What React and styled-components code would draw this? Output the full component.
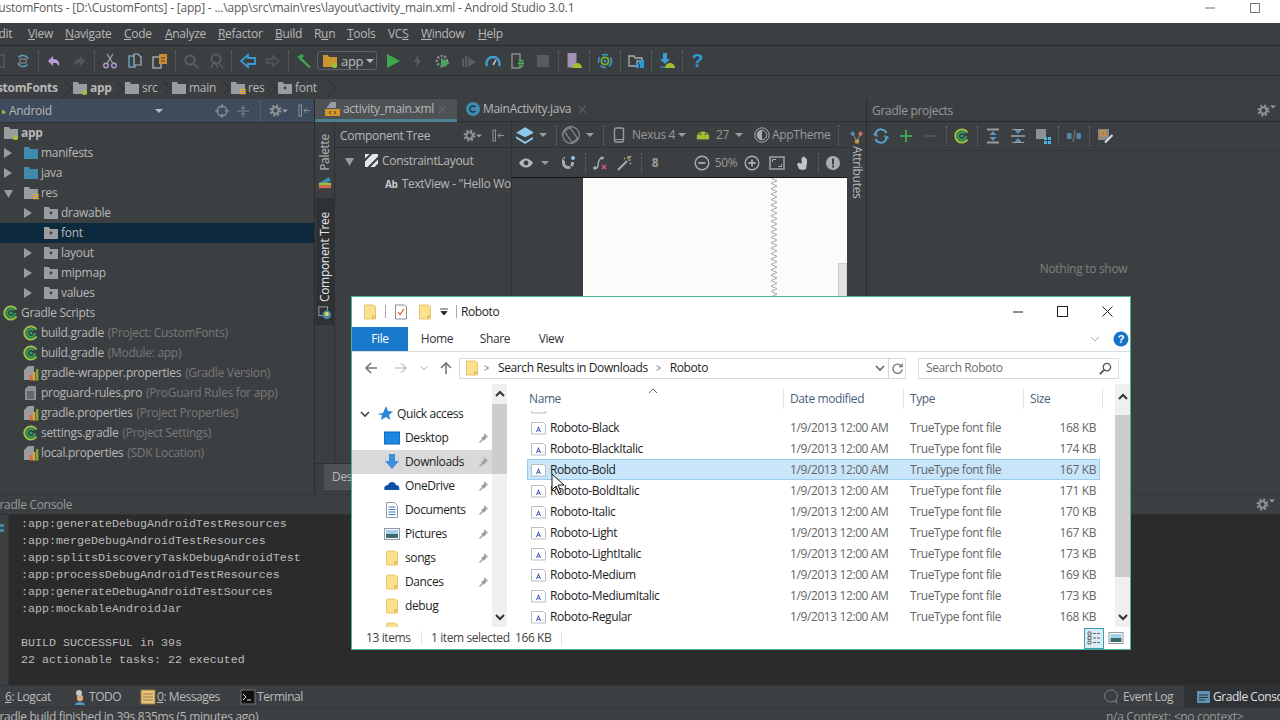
import React from 'react';
import styled, { createGlobalStyle } from 'styled-components';

const Global = createGlobalStyle`
  html, body { margin: 0; padding: 0; background: #2b2b2b; }
  * { box-sizing: border-box; }
`;

const UI = '"Open Sans", "Noto Sans", sans-serif';

const Screen = styled.div`
  position: relative; width: 1280px; height: 720px; overflow: hidden;
  display: flex; flex-direction: column; background: #3c3f41;
  font: 12px/16px ${UI}; letter-spacing: -0.3px; color: #b8b8b8;
`;
const TitleBar = styled.div`
  height: 23px; flex: none; background: #fff; color: #5a5a5a; display: flex; align-items: flex-start;
  padding-right: 3px; white-space: nowrap; letter-spacing: -0.2px;
`;
const TitleText = styled.span` margin-left: -9px; flex: 1; `;
const WinCtl = styled.div` width: 45px; height: 16px; display: flex; align-items: center; justify-content: center; flex: none; `;
const Menu = styled.div`
  height: 23px; flex: none; display: flex; align-items: center; padding-bottom: 1px;
  border-bottom: 1px solid #2b2b2b; white-space: nowrap;
`;
const MenuItem = styled.span`
  width: ${p => p.$w}px; flex: none; margin-left: ${p => p.$ml || 0}px;
  u { text-decoration-thickness: 1px; text-underline-offset: 1px; }
`;
const Toolbar = styled.div`
  height: 30px; flex: none; display: flex; align-items: center; margin-left: -15px;
  border-bottom: 1px solid #2f3132;
`;
const ToolBtn = styled.div`
  width: ${p => p.$w || 25}px; height: 22px; flex: none; display: flex; align-items: center; justify-content: center;
  margin-left: ${p => p.$ml || 0}px;
`;
const Sep = styled.div`
  width: ${p => p.$w || 6}px; height: 20px; flex: none;
  &::after { content: ''; display: block; margin: 0 auto; width: 0; height: 100%; border-left: 1px dotted #6a6d6f; }
`;
const Combo = styled.div`
  width: 60px; height: 19px; margin: 0 3px 0 1px; flex: none; display: flex; align-items: center; gap: 3px; padding: 0 3px 0 4px;
  border: 1px solid #5e6163; border-radius: 3px; font-size: 13px; color: #bbb;
`;
const Help = styled.span` font: bold 19px/22px "Liberation Sans", sans-serif; color: #2e9bd6; `;
const Crumbs = styled.div`
  height: 23px; flex: none; display: flex; align-items: center; white-space: nowrap; margin-left: -18px;
`;
const Crumb = styled.div`
  display: flex; align-items: center; gap: 2px; width: ${p => p.$w}px; flex: none; font-weight: ${p => p.$b ? 700 : 400};
  position: relative;
  &::after {
    content: ''; position: absolute; right: 2px; top: 3px; width: 13px; height: 13px;
    border-top: 1px solid #2f3132; border-right: 1px solid #2f3132; transform: rotate(45deg) scale(.75, 1.1);
  }
`;
const Body = styled.div` height: 395px; flex: none; display: flex; `;
const Left = styled.div`
  width: 315px; flex: none; border-right: 1px solid #2b2b2b; display: flex; flex-direction: column;
`;
const PanelHead = styled.div`
  height: 24px; flex: none; background: #3d4b5c; display: flex; align-items: center; border-bottom: 1px solid #2f3132;
`;
const HeadLabel = styled.span` margin-left: 1px; width: 146px; flex: none; `;
const Tree = styled.div` display: flex; flex-direction: column; `;
const Row = styled.div`
  height: 20px; display: flex; align-items: center; white-space: nowrap; flex: none;
  padding-left: ${p => p.$lvl ? 3 + (p.$lvl - 1) * 20 : 3}px;
  background: ${p => p.$sel ? '#0d293e' : 'transparent'};
  font-weight: ${p => p.$b ? 700 : 400};
`;
const Arrow = styled.span` width: 20px; flex: none; display: flex; `;
const RowIcon = styled.span` width: 18px; height: 16px; flex: none; display: flex; align-items: center; `;
const Dim = styled.span` color: #787878; margin-left: 4px; `;
const Center = styled.div`
  width: 552px; flex: none; border-right: 1px solid #2b2b2b; display: flex; flex-direction: column;
`;
const Tabs = styled.div` height: 23px; flex: none; display: flex; border-bottom: 1px solid #2f3132; `;
const Tab = styled.div`
  width: 142px; flex: none; display: flex; align-items: center; gap: 3px; padding: 0 0 ${p => p.$sel ? 0 : 3}px 9px; height: 23px;
  background: ${p => p.$sel ? '#4e5254' : 'transparent'};
  border-bottom: ${p => p.$sel ? '3px solid #4a808f' : 'none'};
`;
const TabName = styled.span` width: 92px; flex: none; white-space: nowrap; `;
const Main = styled.div` flex: 1; display: flex; min-height: 0; `;
const Strip = styled.div`
  width: 20px; flex: none; display: flex; flex-direction: column; border-right: 1px solid #2f3132; padding-left: 1px;
`;
const VTab = styled.div`
  display: flex; flex-direction: column; align-items: center; flex: none; height: ${p => p.$h}px;
  background: ${p => p.$sel ? '#2f3234' : 'transparent'}; color: ${p => p.$sel ? '#e6e6e6' : '#bbb'};
  padding-top: ${p => p.$pt}px; gap: 4px;
`;
const VText = styled.span`
  writing-mode: vertical-rl; transform: rotate(${p => p.$cw ? 0 : 180}deg); white-space: nowrap; line-height: 18px;
`;
const CompTree = styled.div` width: 177px; flex: none; border-right: 1px solid #2f3132; display: flex; flex-direction: column; overflow: hidden; `;
const CTHead = styled.div`
  height: 26px; flex: none; display: flex; align-items: center; padding: 2px 0 0 5px; white-space: nowrap; border-bottom: 1px solid #2f3132;
  margin-bottom: 1px;
`;
const CTTitle = styled.span` width: 123px; flex: none; `;
const CTRow = styled.div`
  height: 23px; flex: none; display: flex; align-items: center; padding-left: ${p => p.$pl}px; gap: ${p => p.$gap}px; white-space: nowrap;
`;
const Ab = styled.b` font: bold 10px "Open Sans", sans-serif; color: #c8c8c8; `;
const Constraint = styled.span` margin-left: -7px; `;
const Design = styled.div` width: 335px; flex: none; display: flex; flex-direction: column; `;
const DBar = styled.div`
  height: ${p => p.$h}px; flex: none; display: flex; align-items: center; border-bottom: 1px solid ${p => p.$dark ? '#141414' : '#2f3132'}; white-space: nowrap;
  color: #9a9a9a;
`;
const DLabel = styled.span` width: ${p => p.$w}px; flex: none; text-align: ${p => p.$c ? 'center' : 'left'}; font-weight: ${p => p.$b ? 700 : 400}; `;
const Canvas = styled.div` flex: 1; padding-left: 71px; display: flex; `;
const Page = styled.div` flex: 1; background: #fbfcfa; position: relative; overflow: hidden; `;
const Zig = styled.svg` position: absolute; left: 187px; top: 0; `;
const PageScroll = styled.div` position: absolute; right: 0; top: 85px; bottom: 0; width: 9px; background: #e2e3e2; border: 1px solid #cfcfcf; `;
const AttrStrip = styled.div` flex: 1; display: flex; flex-direction: column; align-items: center; padding-top: 9px; gap: 1px; `;
const DesignBar = styled.div` height: 31px; flex: none; display: flex; border-top: 1px solid #2f3132; padding-left: 9px; `;
const DesignTab = styled.div` width: 90px; height: 26px; background: #4e5254; padding: 5px 0 0 8px; `;
const Right = styled.div` width: 433px; flex: none; display: flex; flex-direction: column; `;
const RightHead = styled.div`
  height: 23px; flex: none; display: flex; align-items: center; padding: 1px 0 0 5px; color: #999; border-bottom: 1px solid #2b2b2b;
`;
const Grow = styled.span` flex: 1; `;
const RightBar = styled.div` height: 29px; flex: none; display: flex; align-items: center; border-bottom: 1px solid #333536; `;
const Nothing = styled.div` padding: 110px 0 0 0; text-align: center; color: #7f7f7f; font-size: 12px; `;
const ConHead = styled.div`
  height: 20px; flex: none; display: flex; align-items: center; color: #999; white-space: nowrap; border-top: 1px solid #35383a;
`;
const ConTitle = styled.span` margin-left: -9px; flex: 1; `;
const GearSlot = styled.span` width: ${p => p.$w}px; flex: none; padding-left: 16px; display: flex; `;
const Console = styled.div` height: 171px; flex: none; display: flex; background: #2b2b2b; border-top: 1px solid #2f3132; `;
const Gutter = styled.div` width: 9px; flex: none; background: #3c3f41; border-right: 1px solid #333; padding-top: 9px; overflow: hidden; `;
const Log = styled.pre`
  margin: 0; padding: 1px 0 0 12px; font: 11.67px/17px "Liberation Mono", monospace; letter-spacing: 0; color: #bbbbbb;
`;
const Tools = styled.div`
  height: 22px; flex: none; display: flex; align-items: center; padding-left: 5px; border-top: 1px solid #323436; white-space: nowrap;
  letter-spacing: -0.45px;
`;
const ToolItem = styled.div`
  display: flex; align-items: center; gap: ${p => p.$gap || 1}px; height: 100%; flex: none; width: ${p => p.$w}px;
  background: ${p => p.$sel ? '#2f3234' : 'transparent'}; padding-left: ${p => p.$pl || 0}px;
  color: ${p => p.$sel ? '#e0e0e0' : '#bbb'};
  u { text-underline-offset: 1px; }
`;
const Status = styled.div`
  height: 13px; flex: none; display: flex; padding-top: 1px; border-top: 1px solid #323436; white-space: nowrap; overflow: hidden;
`;
const StatusL = styled.span` margin-left: -9px; flex: 1; `;
const StatusR = styled.span` width: 174px; flex: none; color: #999; `;

/* explorer */
const Win = styled.div`
  position: absolute; left: 351px; top: 296px; width: 780px; height: 354px; background: #fff; border: 1px solid #46b598;
  color: #1e1e1e; display: flex; flex-direction: column; letter-spacing: -0.4px;
`;
const WTitle = styled.div` height: 28px; flex: none; display: flex; align-items: center; padding: 1px 0 0 10px; `;
const QSep = styled.span` width: 1px; height: 13px; background: #aaa; flex: none; margin: 0 ${p => p.$m || 11}px; `;
const QGap = styled.span` width: ${p => p.$w}px; flex: none; `;
const WName = styled.span` flex: 1; margin-left: -4px; `;
const WBtn = styled.span` width: 45px; display: flex; justify-content: center; flex: none; `;
const Ribbon = styled.div` height: 27px; flex: none; display: flex; align-items: flex-start; padding-top: 2px; border-bottom: 1px solid #dadbdc; `;
const FileTab = styled.div` width: 56px; height: 24px; background: #1979ca; color: #fff; display: flex; align-items: center; justify-content: center; flex: none; `;
const RTab = styled.div` width: ${p => p.$w}px; height: 24px; display: flex; align-items: center; justify-content: center; flex: none; color: #333; `;
const RRight = styled.div` margin-left: auto; height: 24px; display: flex; align-items: center; gap: 13px; padding-right: 1px; `;
const Addr = styled.div` height: 32px; flex: none; display: flex; align-items: center; `;
const NavBtn = styled.span` width: ${p => p.$w}px; flex: none; display: flex; justify-content: center; `;
const AddrBox = styled.div`
  width: 447px; height: 21px; border: 1px solid #d9d9d9; display: flex; align-items: center; padding-left: 4px; flex: none; margin-left: 3px;
`;
const AddrText = styled.span` flex: 1; display: flex; align-items: center; gap: 7px; margin-left: 3px; color: #1e1e1e; `;
const AddrEnd = styled.span` width: 17px; height: 100%; flex: none; display: flex; align-items: center; justify-content: center; border-left: 1px solid #d9d9d9; margin-left: 3px; `;
const SearchBox = styled.div`
  width: 201px; height: 21px; margin-left: 12px; border: 1px solid #d9d9d9; display: flex; align-items: center; padding: 0 6px 0 7px; color: #6d6d6d; flex: none; justify-content: space-between;
`;
const WBody = styled.div` flex: 1; display: flex; min-height: 0; `;
const Nav = styled.div` width: 140px; flex: none; display: flex; flex-direction: column; overflow: hidden; padding-top: 18px; `;
const NavRow = styled.div`
  height: 24px; flex: none; display: flex; align-items: center; background: ${p => p.$sel ? '#d9d9d9' : 'transparent'};
  padding-left: ${p => p.$pl || 32}px; gap: ${p => p.$gap || 5}px; color: #1e1e1e;
`;
const NavName = styled.span` width: 67px; flex: none; white-space: nowrap; `;
const QuickName = styled.span` margin-left: -3px; white-space: nowrap; `;
const Scroll = styled.div` width: 15px; flex: none; background: #f0f0f0; display: flex; flex-direction: column; `;
const ScrollCap = styled.div`
  height: ${p => p.$h || 20}px; flex: none; display: flex; justify-content: center; align-items: ${p => p.$top ? 'flex-start' : 'center'};
  padding-top: ${p => p.$top ? 8 : 0}px;
`;
const ScrollTop = styled.div` height: ${p => p.$h}px; flex: none; `;
const Thumb = styled.div` height: ${p => p.$h}px; flex: none; background: #cdcdcd; `;
const List = styled.div` width: 605px; margin-left: 3px; flex: none; display: flex; flex-direction: column; min-height: 0; `;
const ListHead = styled.div` height: 27px; flex: none; display: flex; position: relative; color: #4c607a; `;
const Col = styled.div`
  width: ${p => p.$w}px; flex: none; padding: 7px 0 0 ${p => p.$pl || 6}px; position: relative;
  &::after { content: ''; position: absolute; right: 0; top: 4px; bottom: 2px; width: 1px; background: #e5e5e5; }
`;
const SortMark = styled.svg` position: absolute; left: 138px; top: 4px; `;
const Rows = styled.div` flex: 1; overflow: hidden; min-height: 0; `;
const FileRow = styled.div`
  height: 21px; margin: ${p => p.$first ? '-15px' : 0} 0 0 17px; width: 573px; padding-left: 4px; display: grid; align-items: center; white-space: nowrap;
  grid-template-columns: 19px 240px 120px 120px 66px;
  background: ${p => p.$sel ? '#c9e5fa' : 'transparent'};
  box-shadow: ${p => p.$sel ? 'inset 0 0 0 1px #9acdf0' : 'none'};
`;
const Cell = styled.span` color: #666; text-align: ${p => p.$r ? 'right' : 'left'}; `;
const WStatus = styled.div` height: 22px; flex: none; display: flex; align-items: center; padding-left: 14px; color: #444; white-space: nowrap; `;
const StatSep = styled.span` width: 1px; height: 14px; background: #e2e2e2; flex: none; `;
const Items = styled.span` width: 55px; flex: none; `;
const Sel = styled.span` width: 130px; flex: none; margin-left: 9px; `;
const ViewBtns = styled.div` margin-left: auto; display: flex; gap: 2px; padding-right: 4px; `;
const ViewBtn = styled.span`
  width: 20px; height: 21px; display: flex; align-items: center; justify-content: center;
  background: ${p => p.$sel ? '#d8ecf5' : 'transparent'}; border: 1px solid ${p => p.$sel ? '#3f9eb5' : 'transparent'};
`;
const Cursor = styled.svg` position: absolute; left: 551px; top: 473px; `;

const Svg = styled.svg` display: block; flex: none; `;
const Ic = ({ s = 16, vb = '0 0 16 16', children }) => (
  <Svg width={s} height={s} viewBox={vb}>{children}</Svg>
);

/* IDE icons */
const Folder = ({ c = '#9a9d9f', dot, lines, green }) => (
  <Ic>
    <path d="M1 2h5l1 2h8v10H1z" fill={c} />
    {dot && <circle cx="8" cy="8" r="1.4" fill="#3c3f41" />}
    {lines && <g fill="#e0a83c"><rect x="10" y="9" width="6" height="1.2" /><rect x="10" y="11" width="6" height="1.2" /><rect x="10" y="13" width="6" height="1.2" /></g>}
    {green && <circle cx="12.5" cy="12.5" r="2.6" fill="#97c13a" />}
  </Ic>
);
const Caret = ({ open, c = '#9a9d9f' }) => (
  <Ic s={10} vb="0 0 10 10">
    {open ? <path d="M1 2h9l-4.5 8z" fill={c} /> : <path d="M1 0l8 5-8 5z" fill={c} />}
  </Ic>
);
const Drop = ({ c = '#9a9d9f', s = 8 }) => <Ic s={s} vb="0 0 8 8"><path d="M0 2h8L4 6z" fill={c} /></Ic>;
const Gear = ({ c = '#8f9294', s = 13 }) => (
  <Ic s={s} vb="0 0 14 14">
    <circle cx="7" cy="7" r="5.2" fill="none" stroke={c} strokeWidth="2.6" strokeDasharray="2.1 2" />
    <circle cx="7" cy="7" r="3.4" fill="none" stroke={c} strokeWidth="2.2" />
  </Ic>
);
const GearDrop = () => <><Gear /><Drop s={6} /></>;
const HideIcon = () => (
  <Ic s={13} vb="0 0 13 13">
    <rect x="1" y="1" width="2.5" height="11" fill="none" stroke="#8f9294" />
    <path d="M12 6.5H6M8.5 4L6 6.5 8.5 9" fill="none" stroke="#8f9294" />
  </Ic>
);
const GradleIc = ({ s = 16 }) => (
  <Ic s={s}>
    <path d="M13.5 11.5A6.6 6.6 0 1 1 13.5 4.5" fill="none" stroke="#9bc346" strokeWidth="2" />
    <path d="M12 8a4 4 0 1 1-1-2.7" fill="none" stroke="#2f9e5b" strokeWidth="2" />
    <circle cx="8" cy="8" r="1.6" fill="#2f9e5b" />
  </Ic>
);
const PropIc = () => (
  <Ic>
    <path d="M1 5l4-4h6v14H1z" fill="#9a9d9f" />
    <rect x="7" y="10" width="2.4" height="5.6" fill="#e0662a" />
    <rect x="10" y="7" width="2.4" height="8.6" fill="#e0a03c" />
    <rect x="13" y="4" width="2.4" height="11.6" fill="#7fae2e" />
  </Ic>
);
const TextFileIc = () => (
  <Ic>
    <path d="M2 4l3-3h8v14H2z" fill="#8e9193" />
    <path d="M4 7h7M4 9h7M4 11h7M4 13h7" stroke="#3c3f41" />
  </Ic>
);
const XmlIc = () => (
  <Ic>
    <path d="M3 6l4-5h5v6H3z" fill="#9a9d9f" />
    <rect x="1" y="8" width="15" height="7" fill="#d9952c" />
    <path d="M7 10l-2 1.5L7 13M10 10l2 1.5L10 13" stroke="#3c3f41" fill="none" />
  </Ic>
);
const ClassIc = () => (
  <Ic s={14} vb="0 0 14 14">
    <circle cx="7" cy="7" r="7" fill="#3f8bab" />
    <path d="M9.3 5.2a3 3 0 1 0 0 3.6" fill="none" stroke="#17323f" strokeWidth="1.3" />
  </Ic>
);
const Close = () => <Ic s={9} vb="0 0 9 9"><path d="M1 1l7 7M8 1L1 8" stroke="#6e7173" strokeWidth="1" /></Ic>;
const SyncIc = ({ c = '#5a9ec9' }) => (
  <Ic>
    <path d="M13.5 5A6 6 0 0 0 3 4L2 8M2.5 11A6 6 0 0 0 13 12l1-4" fill="none" stroke={c} strokeWidth="2" />
    <path d="M0 6h4v3M16 10h-4V7" fill="none" stroke={c} strokeWidth="1" />
  </Ic>
);
const Paths = ({ d, c, w = 1.4, f = 'none' }) => <Ic><path d={d} fill={f} stroke={c} strokeWidth={w} /></Ic>;

const tb = {
  save: <Paths d="M2 2h12v12H2z" c="#5a5d5f" />,
  sync: <Ic><path d="M13 6A5.5 5.5 0 0 0 3.5 4.5M3 10a5.5 5.5 0 0 0 9.5 1.5" fill="none" stroke="#5b95b8" strokeWidth="1.6" /><rect x="5" y="6" width="6" height="4" fill="none" stroke="#8f9294" /></Ic>,
  undo: <Paths d="M7 3L2 8l5 5V10h3l3 3c1-4-1-7-6-7z" c="none" w={0} f="#b89bd3" />,
  redo: <Paths d="M9 3l5 5-5 5V10H6l-3 3c-1-4 1-7 6-7z" c="none" w={0} f="#55585a" />,
  cut: <Ic><circle cx="4" cy="12.5" r="2.3" fill="none" stroke="#b49ad0" strokeWidth="1.4" /><circle cx="12" cy="12.5" r="2.3" fill="none" stroke="#b49ad0" strokeWidth="1.4" /><path d="M5 10.5L11 1M11 10.5L5 1" stroke="#9a9d9f" strokeWidth="1.4" /></Ic>,
  copy: <Ic><path d="M2 3h6v11H2z" fill="none" stroke="#6aa6c8" strokeWidth="1.4" /><path d="M7 1h4l3 3v8H7z" fill="#3c3f41" stroke="#a9b7c2" strokeWidth="1.2" /></Ic>,
  paste: <Ic><rect x="1" y="4" width="8" height="11" fill="none" stroke="#a9adb0" strokeWidth="1.4" /><rect x="7" y="1" width="8" height="10" fill="#d08a35" /><path d="M9 5h4M9 8h4" stroke="#3c3f41" /></Ic>,
  find: <Ic><circle cx="7" cy="7" r="4.6" fill="none" stroke="#5c5f61" strokeWidth="2" /><path d="M10.5 10.5L15 15" stroke="#5c5f61" strokeWidth="2" /></Ic>,
  repl: <Ic><circle cx="8" cy="6" r="4.6" fill="none" stroke="#5c5f61" strokeWidth="1.8" /><path d="M3 15l3-6h1l3 6M12 11l3 4" fill="none" stroke="#5c5f61" strokeWidth="1.4" /></Ic>,
  back: <Paths d="M8 2L1 8l7 6v-3h7V5H8z" c="#3c9bd4" w={1.8} />,
  fwd: <Paths d="M8 3l6 5-6 5v-3H2V6h6z" c="#55585a" w={1.6} />,
  hammer: <Ic><path d="M1 4l5-3 2 2-3 3zM5 4l10 10-2 1L3 6z" fill="#3ea455" /></Ic>,
  run: <Ic><path d="M2 1l13 7-13 7z" fill="#3fa84f" /></Ic>,
  bolt: <Ic><path d="M9 1L4 9h3l-1 6 5-8H8z" fill="#5c5f61" /></Ic>,
  debug: <Ic><circle cx="7" cy="8" r="5" fill="none" stroke="#8a8d8f" strokeWidth="2.6" strokeDasharray="2 1.6" /><path d="M6 5l9 5-9 5z" fill="#48a75b" /></Ic>,
  profile: <Ic><path d="M2 6h2v8H2zM5 3h2v11H5z" fill="#5c5f61" /><path d="M8 4l8 5-8 5z" fill="#5c5f61" /></Ic>,
  speed: <Ic><path d="M2 13a6.5 6.5 0 1 1 12 0" fill="none" stroke="#3b9fd4" strokeWidth="2.4" /><path d="M8 12l3-5" stroke="#b8bbbd" strokeWidth="1.6" /></Ic>,
  attach: <Ic><rect x="2" y="1" width="8" height="14" fill="none" stroke="#8f9294" strokeWidth="1.4" /><ellipse cx="11" cy="10.5" rx="3" ry="4" fill="#45b35f" /><path d="M7 9h8M7 12h8" stroke="#3c3f41" /></Ic>,
  stop: <Ic><rect x="2" y="2" width="12" height="12" fill="#5a5d5f" /></Ic>,
  avd: <Ic><rect x="2" y="0" width="8" height="14" fill="#a591bd" stroke="#8f9294" /><path d="M6 15a5 5 0 0 1 10 0z" fill="#a3bd35" /></Ic>,
  gradleSync: <Ic><circle cx="8" cy="8" r="6.5" fill="none" stroke="#3a9fc4" strokeWidth="1.6" strokeDasharray="6 3" /><circle cx="8" cy="8" r="3.6" fill="none" stroke="#78b03c" strokeWidth="1.8" /><circle cx="8" cy="8" r="1.2" fill="#3a9fc4" /></Ic>,
  struct: <Ic><path d="M1 3h5l1 2h7v3H9v5H1z" fill="none" stroke="#a9adb0" strokeWidth="1.3" /><path d="M11 7h5v4h-5zM8 11h3v4H8zM12 11h4v4h-4z" fill="#2e97d6" /></Ic>,
  sdk: <Ic><path d="M4 0h4v6h3L6 11 1 6h3z" fill="#3b9fd4" /><path d="M1 14h6" stroke="#3b9fd4" /><path d="M6 15a5 5 0 0 1 10 0z" fill="#a3bd35" /></Ic>,
  expand: <Ic><path d="M2 1.5h12M2 14.5h12" stroke="#9a9d9f" strokeWidth="2" /><path d="M8 3L4.5 7h7zM8 13l-3.5-4h7z" fill="#5b95b8" /></Ic>,
  collapse: <Ic><path d="M1 8h14" stroke="#9a9d9f" strokeWidth="1.6" /><path d="M2 1.5h12M2 14.5h12" stroke="#9a9d9f" /><path d="M4.5 2h7L8 6zM4.5 14h7L8 10z" fill="#5b95b8" /></Ic>,
  group: <Ic><rect x="1" y="1" width="10" height="10" fill="#8a9199" /><path d="M9 9h3v3H9zM13 9h3v3h-3zM9 13h3v3H9zM13 13h3v3h-3z" fill="#4db4de" /></Ic>,
  link: <Ic><rect x="1" y="5" width="4.5" height="6" fill="#4a88a8" /><rect x="10.5" y="5" width="4.5" height="6" fill="#4a88a8" /><path d="M9 2L7 14" stroke="#6b6e70" strokeWidth="1.3" /></Ic>,
  gset: <Ic><rect x="1" y="1" width="11" height="11" fill="#85898c" /><circle cx="6" cy="5.5" r="2.6" fill="none" stroke="#d68b2c" strokeWidth="1.6" /><path d="M15.5 7l-7.5 7.5" stroke="#d5d7d8" strokeWidth="2.2" /></Ic>,
  plus: <Paths d="M8 2v12M2 8h12" c="#3ea455" w={2} />,
  minus: <Paths d="M2 8h12" c="#55585a" w={1.6} />,
  target: <Ic s={14}><circle cx="8" cy="8" r="5.5" fill="none" stroke="#8f9294" strokeWidth="1.6" /><path d="M8 0v5M8 11v5M0 8h5M11 8h5" stroke="#8f9294" strokeWidth="1.4" /></Ic>,
  collapseS: <Ic s={14}><path d="M1 8h14" stroke="#8f9294" /><path d="M8 1v5M5.5 4L8 6l2.5-2M8 15v-5M5.5 12L8 10l2.5 2" fill="none" stroke="#8f9294" /></Ic>,
  layers: <Ic s={18}><path d="M8 9L0 5l8-5 8 5z" fill="#8cc8ee" transform="translate(1 1)" /><path d="M1 9l8 5 8-5v2l-8 5-8-5z" fill="#8cc8ee" /></Ic>,
  rotate: <Ic s={18}><circle cx="8" cy="8" r="7.4" fill="none" stroke="#8f9294" /><rect x="5" y="2" width="6" height="12" transform="rotate(-35 8 8)" fill="#3c3f41" stroke="#8f9294" /></Ic>,
  phone: <Ic s={16}><rect x="3.5" y="1" width="9" height="14" rx="1.5" fill="none" stroke="#9a9d9f" strokeWidth="1.4" /><path d="M3.5 12.5h9" stroke="#9a9d9f" /></Ic>,
  droid: <Ic s={14}><path d="M1 12a7 7 0 0 1 14 0z" transform="translate(0 -1)" fill="#a3bd35" /><rect x="1" y="8" width="14" height="5" fill="#a3bd35" /><circle cx="5" cy="7" r="1" fill="#3c3f41" /><circle cx="11" cy="7" r="1" fill="#3c3f41" /></Ic>,
  theme: <Ic><circle cx="8" cy="8" r="7.2" fill="none" stroke="#a9adb0" /><circle cx="8" cy="8" r="4.8" fill="none" stroke="#a9adb0" /><path d="M8 3.2a4.8 4.8 0 0 0 0 9.6z" fill="#a9adb0" /></Ic>,
  eye: <Ic><path d="M1 8c4-6 10-6 14 0-4 6-10 6-14 0z" fill="#b5b8ba" /><circle cx="8" cy="8" r="2.4" fill="#3c3f41" /></Ic>,
  magnet: <Ic><path d="M2 2h3v6a3 3 0 0 0 6 0v-1h3v1a6 6 0 0 1-12 0z" fill="#a9adb0" /><circle cx="13" cy="3" r="2" fill="#8cc8ee" /><path d="M1 1l13 14" stroke="#3c3f41" strokeWidth="1.4" /></Ic>,
  pathx: <Ic><circle cx="3" cy="13" r="1.8" fill="#a9adb0" /><path d="M3 13h2c2-1 0-10 5-10h2" fill="none" stroke="#a9adb0" strokeWidth="1.4" /><circle cx="10" cy="3" r="1.6" fill="#a9adb0" /><path d="M10 10l4 4M14 10l-4 4" stroke="#d5567a" strokeWidth="1.6" /></Ic>,
  wand: <Ic><path d="M1 15L10 6" stroke="#a9adb0" strokeWidth="2" /><path d="M11 1v3M14 5h-3M14 1l-2 2M7 3l1 1M14 9l-1-1" stroke="#c9b38a" strokeWidth="1.2" /></Ic>,
  zoomOut: <Ic><circle cx="8" cy="8" r="6.8" fill="none" stroke="#a9adb0" strokeWidth="1.4" /><path d="M4.5 8h7" stroke="#a9adb0" strokeWidth="1.8" /></Ic>,
  zoomIn: <Ic><circle cx="8" cy="8" r="6.8" fill="none" stroke="#a9adb0" strokeWidth="1.4" /><path d="M4.5 8h7M8 4.5v7" stroke="#a9adb0" strokeWidth="1.8" /></Ic>,
  fit: <Ic><rect x="1" y="2" width="14" height="12" fill="none" stroke="#a9adb0" strokeWidth="1.4" /><path d="M3.5 7V4.5H7M12.5 9v2.5H9" fill="none" stroke="#a9adb0" /></Ic>,
  hand: <Ic><path d="M3 9l2 5c1 1 6 1 7 0l1-6V4h-1.2v4-5.5h-1.4V8 1.5H9V8 2.5H7.6V9L5 7.5z" fill="#c3c5c7" /></Ic>,
  warn: <Ic><circle cx="8" cy="8" r="7" fill="#a9adb0" /><rect x="7" y="3.5" width="2" height="6" fill="#3c3f41" /><rect x="7" y="10.5" width="2" height="2" fill="#3c3f41" /></Ic>,
};

/* explorer icons */
const YFolder = () => (
  <Ic>
    <path d="M2.5 1h9l2 2v12h-11z" fill="#fbe08f" stroke="#e6c56c" />
    <path d="M10.5 15v-3h3" fill="#e6c56c" stroke="#e0b84f" />
  </Ic>
);
const FontFile = () => (
  <Ic>
    <path d="M0.5 2.5h12l2 2v9.5h-14z" fill="#fff" stroke="#b9bcc2" />
    <path d="M5 12l2.5-6L10 12H8.9l-.4-1.2H6.5L6.1 12zM6.9 9.9h1.2L7.5 8.3z" fill="#3a56a8" />
  </Ic>
);
const Pin = () => <Ic s={12} vb="0 0 12 12"><path d="M7 1l4 4-2 1-2 3-1-1-3 3-1-1 3-3-1-1 3-2z" fill="#9ba1a6" /></Ic>;
const Chev = ({ d = 'M1 1l4 4 4-4', c = '#555', w = 1.6, s = 10 }) => <Ic s={s} vb="0 0 10 6"><path d={d} fill="none" stroke={c} strokeWidth={w} /></Ic>;
const ArrowL = ({ c, dir = 'left' }) => (
  <Ic s={14} vb="0 0 14 14"><path d={dir === 'left' ? 'M13 7H2M7 2L2 7l5 5' : dir === 'right' ? 'M1 7h11M7 2l5 5-5 5' : 'M7 13V2M2 7l5-5 5 5'} fill="none" stroke={c} strokeWidth="1.6" /></Ic>
);

const navIcons = {
  Desktop: <Ic><rect x="0" y="2" width="16" height="12" fill="#1b87e3" stroke="#0f5fa8" /></Ic>,
  Downloads: <Ic><path d="M5 0h6v7h4l-7 8-7-8h4z" fill="#3b8fdc" /></Ic>,
  OneDrive: <Ic><path d="M1 12c-2-2 0-5 3-5 1-4 7-4 8 0 3 0 4 3 3 5z" fill="#0d4fa3" /></Ic>,
  Documents: <Ic><path d="M2.5 0.5h8l3 3v12h-11z" fill="#fff" stroke="#8b99a8" /><path d="M4.5 5h7M4.5 7.5h7M4.5 10h7M4.5 12.5h7" stroke="#3d79b8" /></Ic>,
  Pictures: <Ic><rect x="0.5" y="2.5" width="15" height="11" fill="#fff" stroke="#8b99a8" /><rect x="2" y="4" width="12" height="4" fill="#9fd0ea" /><rect x="2" y="8" width="12" height="4" fill="#3e6a6e" /></Ic>,
  songs: <YFolder />, Dances: <YFolder />, debug: <YFolder />,
};

const menus = [['Edit', 36, 0, -8], ['View', 37, 0], ['Navigate', 59, 0], ['Code', 41, 0], ['Analyze', 53, 0], ['Refactor', 57, 0], ['Build', 39, 0], ['Run', 33, 1], ['Tools', 41, 0], ['VCS', 33, 2], ['Window', 57, 0], ['Help', 40, 0]];

const tree = [
  { n: 'app', lvl: 0, b: 1, ic: <Folder green /> },
  { n: 'manifests', lvl: 1, arrow: 'r', ic: <Folder c="#3f8bab" /> },
  { n: 'java', lvl: 1, arrow: 'r', ic: <Folder c="#3f8bab" /> },
  { n: 'res', lvl: 1, arrow: 'd', ic: <Folder lines /> },
  { n: 'drawable', lvl: 2, arrow: 'r', ic: <Folder dot /> },
  { n: 'font', lvl: 2, sel: 1, ic: <Folder dot /> },
  { n: 'layout', lvl: 2, arrow: 'r', ic: <Folder dot /> },
  { n: 'mipmap', lvl: 2, arrow: 'r', ic: <Folder dot /> },
  { n: 'values', lvl: 2, arrow: 'r', ic: <Folder dot /> },
  { n: 'Gradle Scripts', lvl: 0, ic: <GradleIc /> },
  { n: 'build.gradle', d: '(Project: CustomFonts)', lvl: 1, ic: <GradleIc /> },
  { n: 'build.gradle', d: '(Module: app)', lvl: 1, ic: <GradleIc /> },
  { n: 'gradle-wrapper.properties', d: '(Gradle Version)', lvl: 1, ic: <PropIc /> },
  { n: 'proguard-rules.pro', d: '(ProGuard Rules for app)', lvl: 1, ic: <TextFileIc /> },
  { n: 'gradle.properties', d: '(Project Properties)', lvl: 1, ic: <PropIc /> },
  { n: 'settings.gradle', d: '(Project Settings)', lvl: 1, ic: <GradleIc /> },
  { n: 'local.properties', d: '(SDK Location)', lvl: 1, ic: <PropIc /> },
];

const files = [
  ['Roboto-Black', '168 KB'], ['Roboto-BlackItalic', '174 KB'], ['Roboto-Bold', '167 KB', 1], ['Roboto-BoldItalic', '171 KB'],
  ['Roboto-Italic', '170 KB'], ['Roboto-Light', '167 KB'], ['Roboto-LightItalic', '173 KB'], ['Roboto-Medium', '169 KB'],
  ['Roboto-MediumItalic', '173 KB'], ['Roboto-Regular', '168 KB'],
];

const log = `:app:generateDebugAndroidTestResources
:app:mergeDebugAndroidTestResources
:app:splitsDiscoveryTaskDebugAndroidTest
:app:processDebugAndroidTestResources
:app:generateDebugAndroidTestSources
:app:mockableAndroidJar

BUILD SUCCESSFUL in 39s
22 actionable tasks: 22 executed`;

const zig = Array.from({ length: 46 }, (_, i) => `${i % 2 ? 7 : 1} ${i * 2.7}`).join(' L');

export default function App() {
  return (
    <Screen>
      <Global />
      <TitleBar>
        <TitleText>CustomFonts - [D:\CustomFonts] - [app] - ...\app\src\main\res\layout\activity_main.xml - Android Studio 3.0.1</TitleText>
        <WinCtl><Ic s={10} vb="0 0 10 10"><path d="M0 5h10" stroke="#777" /></Ic></WinCtl>
        <WinCtl><Ic s={10} vb="0 0 10 10"><rect x=".5" y=".5" width="9" height="9" fill="none" stroke="#777" /></Ic></WinCtl>
      </TitleBar>
      <Menu>
        {menus.map(([n, w, u, ml]) => (
          <MenuItem key={n} $w={w} $ml={ml}>
            {n.slice(0, u)}<u>{n[u]}</u>{n.slice(u + 1)}
          </MenuItem>
        ))}
      </Menu>
      <Toolbar>
        <ToolBtn>{tb.save}</ToolBtn><ToolBtn>{tb.sync}</ToolBtn><Sep />
        <ToolBtn>{tb.undo}</ToolBtn><ToolBtn>{tb.redo}</ToolBtn><Sep />
        <ToolBtn>{tb.cut}</ToolBtn><ToolBtn>{tb.copy}</ToolBtn><ToolBtn>{tb.paste}</ToolBtn><Sep />
        <ToolBtn>{tb.find}</ToolBtn><ToolBtn>{tb.repl}</ToolBtn><Sep $w={7} />
        <ToolBtn>{tb.back}</ToolBtn><ToolBtn>{tb.fwd}</ToolBtn><Sep />
        <ToolBtn>{tb.hammer}</ToolBtn>
        <Combo><Folder c="#c9972e" green />app<Drop c="#bbb" /></Combo>
        <ToolBtn>{tb.run}</ToolBtn><ToolBtn>{tb.bolt}</ToolBtn><ToolBtn>{tb.debug}</ToolBtn><ToolBtn>{tb.profile}</ToolBtn>
        <ToolBtn>{tb.speed}</ToolBtn><ToolBtn>{tb.attach}</ToolBtn><ToolBtn>{tb.stop}</ToolBtn><Sep />
        <ToolBtn>{tb.avd}</ToolBtn><Sep /><ToolBtn>{tb.gradleSync}</ToolBtn><Sep />
        <ToolBtn>{tb.struct}</ToolBtn><Sep /><ToolBtn>{tb.sdk}</ToolBtn><Sep />
        <ToolBtn><Help>?</Help></ToolBtn>
      </Toolbar>
      <Crumbs>
        <Crumb $w={90} $b>CustomFonts</Crumb>
        <Crumb $w={52} $b><Folder green />app</Crumb>
        <Crumb $w={47}><Folder />src</Crumb>
        <Crumb $w={59}><Folder />main</Crumb>
        <Crumb $w={47}><Folder lines />res</Crumb>
        <Crumb $w={60}><Folder dot />font</Crumb>
      </Crumbs>
      <Body>
        <Left>
          <PanelHead>
            <Ic s={8} vb="8 0 8 16"><path d="M8 6a7 7 0 0 1 7 7H8z" fill="#a3bd35" /></Ic>
            <HeadLabel>Android</HeadLabel>
            <Drop c="#bbb" />
            <ToolBtn $w={50} />
            <ToolBtn $w={18}>{tb.target}</ToolBtn>
            <ToolBtn $w={24}>{tb.collapseS}</ToolBtn>
            <Sep $w={10} />
            <ToolBtn $w={26}><GearDrop /></ToolBtn>
            <ToolBtn $w={26}><HideIcon /></ToolBtn>
          </PanelHead>
          <Tree>
            {tree.map((t, i) => (
              <Row key={i} $lvl={t.lvl} $sel={t.sel} $b={t.b}>
                {t.lvl > 0 && <Arrow>{t.arrow && <Caret open={t.arrow === 'd'} />}</Arrow>}
                <RowIcon>{t.ic}</RowIcon>
                {t.n}
                {t.d && <Dim>{t.d}</Dim>}
              </Row>
            ))}
          </Tree>
        </Left>
        <Center>
          <Tabs>
            <Tab $sel><XmlIc /><TabName>activity_main.xml</TabName><Close /></Tab>
            <Tab><ClassIc /><TabName>MainActivity.java</TabName><Close /></Tab>
          </Tabs>
          <Main>
            <Strip>
              <VTab $h={76} $pt={12}>
                <VText>Palette</VText>
                <Ic s={14}><path d="M1 9l10-6v6zM11 2l4 3-4 4z" fill="#3f8bab" /><path d="M1 9h14v3H1z" fill="#a3bd35" /><path d="M1 12h14v3H1z" fill="#d5685a" /></Ic>
              </VTab>
              <VTab $h={127} $pt={14} $sel>
                <VText>Component Tree</VText>
                <Ic s={14}><rect x="1" y="1" width="10" height="10" fill="none" stroke="#a9adb0" /><circle cx="10" cy="10" r="5" fill="#3f8bab" /><circle cx="10" cy="9" r="2.4" fill="#e8d05a" /></Ic>
              </VTab>
            </Strip>
            <CompTree>
              <CTHead>
                <CTTitle>Component Tree</CTTitle>
                <GearDrop />
                <ToolBtn $w={32}><HideIcon /></ToolBtn>
              </CTHead>
              <CTRow $pl={9} $gap={11}>
                <Caret open />
                <Ic s={13} vb="0 0 13 13"><rect width="13" height="13" fill="#e6e6e6" /><path d="M-1 7L7 -1M3 14L14 3M9 15l6-6" stroke="#3c3f41" strokeWidth="2" /></Ic>
                <Constraint>ConstraintLayout</Constraint>
              </CTRow>
              <CTRow $pl={50} $gap={4}><Ab>Ab</Ab><span>TextView - "Hello World!"</span></CTRow>
            </CompTree>
            <Design>
              <DBar $h={26}>
                <ToolBtn $w={24}>{tb.layers}</ToolBtn><ToolBtn $w={14}><Drop /></ToolBtn><Sep $w={12} />
                <ToolBtn $w={18}>{tb.rotate}</ToolBtn><ToolBtn $w={20}><Drop /></ToolBtn><Sep $w={6} />
                <ToolBtn $w={26}>{tb.phone}</ToolBtn><DLabel $w={42}>Nexus 4</DLabel><ToolBtn $w={16}><Drop /></ToolBtn>
                <ToolBtn $w={26}>{tb.droid}</ToolBtn><DLabel $w={16}>27</DLabel><ToolBtn $w={14}><Drop /></ToolBtn>
                <ToolBtn $w={6} />
                <ToolBtn $w={20}>{tb.theme}</ToolBtn><DLabel $w={60}>AppTheme</DLabel><Sep $w={12} />
              </DBar>
              <DBar $h={30} $dark>
                <ToolBtn $w={28}>{tb.eye}</ToolBtn><ToolBtn $w={10}><Drop /></ToolBtn><ToolBtn $w={2} />
                <ToolBtn $w={32}>{tb.magnet}</ToolBtn><Sep $w={3} />
                <ToolBtn $w={26}>{tb.pathx}</ToolBtn><ToolBtn $w={24}>{tb.wand}</ToolBtn><Sep $w={8} />
                <DLabel $w={20} $c $b>8</DLabel><ToolBtn $w={27} />
                <ToolBtn $w={20}>{tb.zoomOut}</ToolBtn><DLabel $w={28} $c>50%</DLabel>
                <ToolBtn $w={24}>{tb.zoomIn}</ToolBtn><ToolBtn $w={26}>{tb.fit}</ToolBtn><ToolBtn $w={24}>{tb.hand}</ToolBtn>
                <Sep $w={8} /><ToolBtn $w={22}>{tb.warn}</ToolBtn>
              </DBar>
              <Canvas>
                <Page>
                  <Zig width="8" height="120" viewBox="0 0 8 120"><path d={`M${zig}`} fill="none" stroke="#a8a8a8" /></Zig>
                  <PageScroll />
                </Page>
              </Canvas>
            </Design>
            <AttrStrip>
              <Ic s={14}><circle cx="3" cy="3" r="2.4" fill="#3f8bab" /><circle cx="12" cy="3" r="2.4" fill="#d5685a" /><circle cx="8" cy="12" r="2.6" fill="#c9972e" /><path d="M3 3l5 9 4-9" fill="none" stroke="#9a9d9f" /></Ic>
              <VText $cw>Attributes</VText>
            </AttrStrip>
          </Main>
          <DesignBar><DesignTab>Design</DesignTab></DesignBar>
        </Center>
        <Right>
          <RightHead>Gradle projects<Grow /><GearSlot $w={59}><GearDrop /></GearSlot></RightHead>
          <RightBar>
            <ToolBtn $ml={1}><SyncIc /></ToolBtn><ToolBtn>{tb.plus}</ToolBtn><ToolBtn>{tb.minus}</ToolBtn><Sep />
            <ToolBtn><GradleIc /></ToolBtn><Sep />
            <ToolBtn>{tb.expand}</ToolBtn><ToolBtn>{tb.collapse}</ToolBtn><ToolBtn>{tb.group}</ToolBtn><Sep />
            <ToolBtn>{tb.link}</ToolBtn><Sep /><ToolBtn>{tb.gset}</ToolBtn>
          </RightBar>
          <Nothing>Nothing to show</Nothing>
        </Right>
      </Body>
      <ConHead><ConTitle>Gradle Console</ConTitle><GearSlot $w={40}><GearDrop /></GearSlot></ConHead>
      <Console>
        <Gutter>
          <Ic s={16}><path d="M0 0h4v3H0zM0 5h4v3H0z" fill="#4a88a8" /><rect x="-6" y="21" width="12" height="14" fill="none" stroke="#7c7f81" /></Ic>
        </Gutter>
        <Log>{log}</Log>
      </Console>
      <Tools>
        <ToolItem $w={67}><span><u>6</u>: Logcat</span></ToolItem>
        <ToolItem $w={68}>
          <Ic><circle cx="7" cy="4" r="3" fill="#c8c8c8" /><circle cx="8" cy="9" r="3.2" fill="#d9a982" /><path d="M3 16c0-4 10-4 10 0z" fill="#4a9bbd" /></Ic>TODO
        </ToolItem>
        <ToolItem $w={100}>
          <Ic><rect x="1" y="1" width="14" height="14" fill="#e7c27e" stroke="#9a7a3a" /><path d="M3 5h10M3 8h10M3 11h10" stroke="#9a7a3a" /></Ic>
          <span><u>0</u>: Messages</span>
        </ToolItem>
        <ToolItem $w={863}>
          <Ic><rect x="1" y="1" width="14" height="14" fill="#111" stroke="#777" /><path d="M3 5l3 3-3 3M7 11h4" fill="none" stroke="#ddd" /></Ic>Terminal
        </ToolItem>
        <ToolItem $w={81} $gap={4}>
          <Ic><ellipse cx="8" cy="7" rx="6.5" ry="6" fill="none" stroke="#7c7f81" /><path d="M11 12l3 2-1-3" fill="none" stroke="#7c7f81" /></Ic>Event Log
        </ToolItem>
        <ToolItem $w={110} $pl={12} $sel>
          <Ic><rect x="1" y="2" width="13" height="12" fill="#5d93b0" /><path d="M3 6h9M3 8.5h9M3 11h6" stroke="#2f3234" /></Ic>Gradle Console
        </ToolItem>
      </Tools>
      <Status>
        <StatusL>Gradle build finished in 39s 835ms (5 minutes ago)</StatusL>
        <StatusR>n/a   Context: &lt;no context&gt;</StatusR>
      </Status>

      <Win>
        <WTitle>
          <YFolder /><QSep $m={7} />
          <Ic><path d="M2.5 1h9l2 2v12h-11z" fill="#fff" stroke="#8d8d8d" /><path d="M5 8l2 2.5L11 5" fill="none" stroke="#d5552a" strokeWidth="1.2" /></Ic>
          <QGap $w={8} />
          <YFolder />
          <QGap $w={7} />
          <Ic s={8} vb="0 0 8 8"><path d="M0 1h8M1 3.5h6L4 7z" stroke="#222" fill="#222" strokeWidth=".8" /></Ic>
          <QSep $m={8} />
          <WName>Roboto</WName>
          <WBtn><Ic s={10} vb="0 0 10 10"><path d="M0 5h10" stroke="#222" /></Ic></WBtn>
          <WBtn><Ic s={11} vb="0 0 11 11"><rect x=".5" y=".5" width="10" height="10" fill="none" stroke="#222" /></Ic></WBtn>
          <WBtn><Ic s={11} vb="0 0 11 11"><path d="M.5.5l10 10M10.5.5l-10 10" stroke="#222" /></Ic></WBtn>
        </WTitle>
        <Ribbon>
          <FileTab>File</FileTab>
          <RTab $w={58}>Home</RTab><RTab $w={58}>Share</RTab><RTab $w={54}>View</RTab>
          <RRight>
            <Chev c="#aaa" w={1} />
            <Ic><circle cx="8" cy="8" r="7.5" fill="#1474c8" /><text x="8" y="12" textAnchor="middle" fontFamily="Liberation Sans, sans-serif" fontWeight="700" fontSize="11" fill="#fff">?</text></Ic>
          </RRight>
        </Ribbon>
        <Addr>
          <NavBtn $w={38}><ArrowL c="#777" /></NavBtn>
          <NavBtn $w={22}><ArrowL c="#ccc" dir="right" /></NavBtn>
          <NavBtn $w={24}><Chev c="#999" w={1.2} s={8} /></NavBtn>
          <NavBtn $w={20}><ArrowL c="#777" dir="up" /></NavBtn>
          <AddrBox>
            <YFolder />
            <AddrText>
              <Chev d="M2 0l5 3-5 3" c="#777" w={1.2} s={8} />Search Results in Downloads
              <Chev d="M2 0l5 3-5 3" c="#777" w={1.2} s={8} />Roboto
            </AddrText>
            <Chev c="#666" s={10} />
            <AddrEnd><Ic s={13} vb="0 0 14 14"><path d="M11.5 5A5 5 0 1 0 12 8M12 1.5V5H8.5" fill="none" stroke="#777" strokeWidth="1.4" /></Ic></AddrEnd>
          </AddrBox>
          <SearchBox>Search Roboto
            <Ic s={13} vb="0 0 14 14"><circle cx="8.5" cy="5.5" r="4" fill="none" stroke="#555" strokeWidth="1.4" /><path d="M5.5 8.5L1 13" stroke="#555" strokeWidth="2" /></Ic>
          </SearchBox>
        </Addr>
        <WBody>
          <Nav>
            <NavRow $pl={8} $gap={7}>
              <Chev c="#444" w={1.6} />
              <Ic><path d="M9 0l2 5 5 .5-4 3.5 1.5 5L9 11l-5 3 1-5-5-1 6-1z" fill="#2b88d8" /></Ic>
              <QuickName>Quick access</QuickName>
            </NavRow>
            {['Desktop', 'Downloads', 'OneDrive', 'Documents', 'Pictures', 'songs', 'Dances', 'debug'].map((n, i) => (
              <NavRow key={n} $sel={n === 'Downloads'}>
                {navIcons[n]}<NavName>{n}</NavName>{i < 7 && <Pin />}
              </NavRow>
            ))}
            <NavRow><YFolder /></NavRow>
          </Nav>
          <Scroll>
            <ScrollCap><Chev d="M1 5l4-4 4 4" c="#333" w={2} /></ScrollCap>
            <Thumb $h={70} />
            <ScrollTop $h={133} />
            <ScrollCap><Chev c="#333" w={2} /></ScrollCap>
          </Scroll>
          <List>
            <ListHead>
              <Col $w={274} $pl={19}>Name</Col>
              <Col $w={120}>Date modified</Col>
              <Col $w={120}>Type</Col>
              <Col $w={79}>Size</Col>
              <SortMark width="10" height="6" viewBox="0 0 10 6"><path d="M1 5l4-4 4 4" fill="none" stroke="#666" /></SortMark>
            </ListHead>
            <Rows>
              <FileRow $first><FontFile /><span /><Cell /><Cell /><Cell /></FileRow>
              {files.map(([n, s, sel]) => (
                <FileRow key={n} $sel={sel}>
                  <FontFile /><span>{n}</span><Cell>1/9/2013 12:00 AM</Cell><Cell>TrueType font file</Cell><Cell $r>{s}</Cell>
                </FileRow>
              ))}
            </Rows>
          </List>
          <Scroll>
            <ScrollCap $h={31} $top><Chev d="M1 5l4-4 4 4" c="#333" w={2} /></ScrollCap>
            <Thumb $h={162} />
            <ScrollTop $h={30} />
            <ScrollCap><Chev c="#333" w={2} /></ScrollCap>
          </Scroll>
        </WBody>
        <WStatus>
          <Items>13 items</Items><StatSep />
          <Sel>1 item selected&nbsp;&nbsp;166 KB</Sel><StatSep />
          <ViewBtns>
            <ViewBtn $sel><Ic s={16}><path d="M2 2h3v3H2zM2 6.5h3v3H2zM2 11h3v3H2z" fill="none" stroke="#666" /><path d="M7 3.5h8M7 8h8M7 12.5h8" stroke="#666" strokeDasharray="3 1" /></Ic></ViewBtn>
            <ViewBtn><Ic><rect x="1" y="2.5" width="14" height="11" fill="#fff" stroke="#999" /><rect x="2.5" y="4" width="11" height="4" fill="#9fd0ea" /><rect x="2.5" y="8" width="11" height="4" fill="#3e6a6e" /></Ic></ViewBtn>
          </ViewBtns>
        </WStatus>
      </Win>
      <Cursor width="14" height="22" viewBox="0 0 14 22"><path d="M1 1v16l4-4 3 7 2-1-3-7h6z" fill="#fff" stroke="#111" /></Cursor>
    </Screen>
  );
}
